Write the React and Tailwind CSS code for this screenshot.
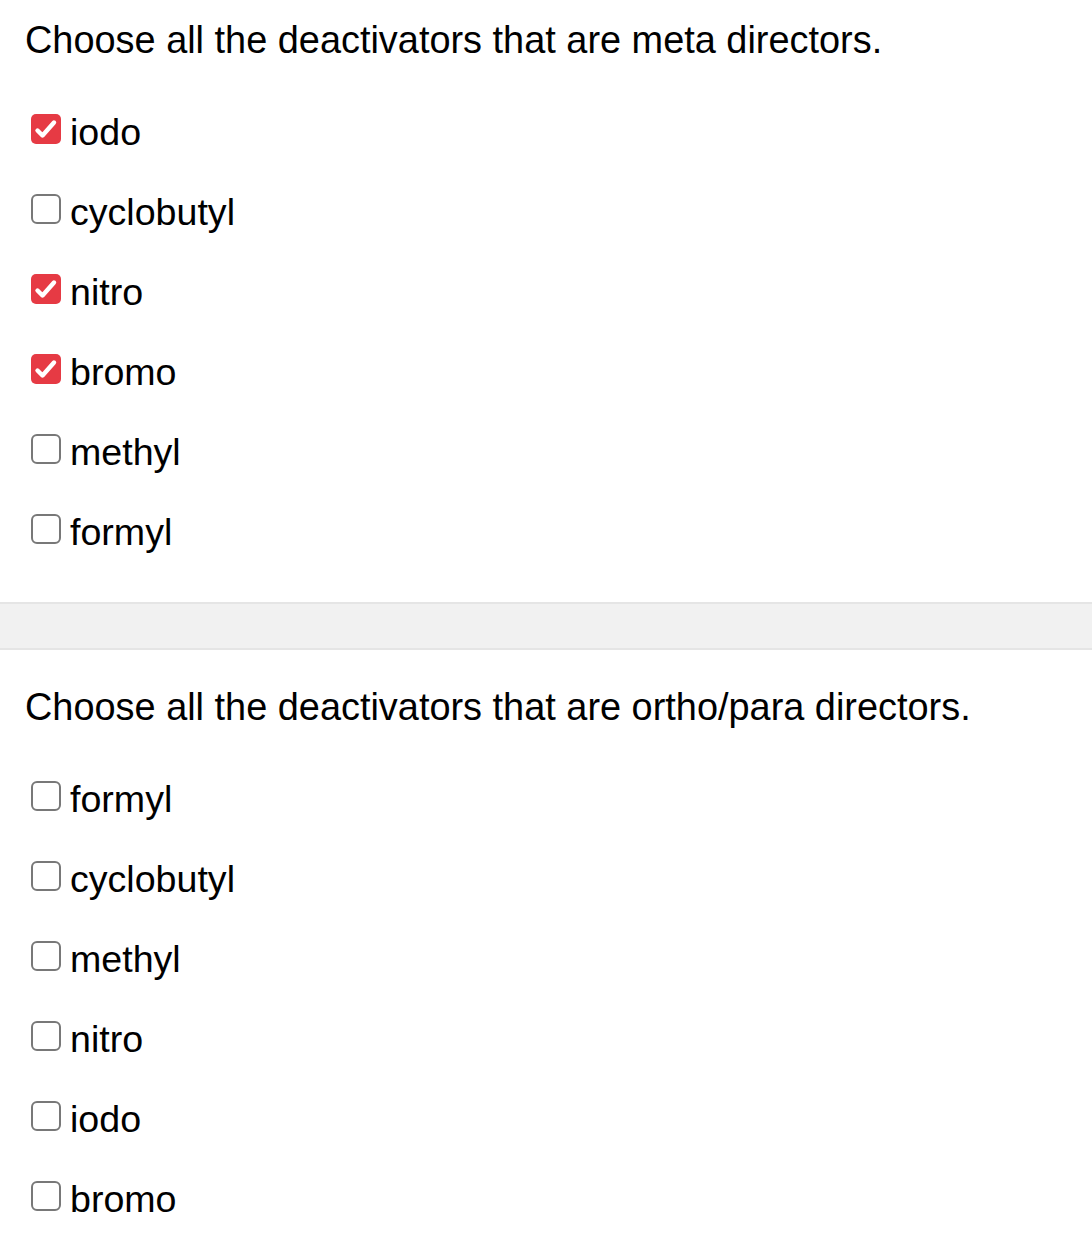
import React from 'react';

const questions = [
  {
    prompt: 'Choose all the deactivators that are meta directors.',
    options: [
      { label: 'iodo', checked: true },
      { label: 'cyclobutyl', checked: false },
      { label: 'nitro', checked: true },
      { label: 'bromo', checked: true },
      { label: 'methyl', checked: false },
      { label: 'formyl', checked: false },
    ],
  },
  {
    prompt: 'Choose all the deactivators that are ortho/para directors.',
    options: [
      { label: 'formyl', checked: false },
      { label: 'cyclobutyl', checked: false },
      { label: 'methyl', checked: false },
      { label: 'nitro', checked: false },
      { label: 'iodo', checked: false },
      { label: 'bromo', checked: false },
    ],
  },
];

function Box({ checked }) {
  if (checked) {
    return (
      <span className="mb-[9px] flex h-[30px] w-[30px] shrink-0 rounded-[5px] bg-[#e63a44]">
        <svg className="h-[30px] w-[30px]" viewBox="0 0 30 30" fill="none">
          <path d="M6.5 16.5l5 5L23 8.5" stroke="white" strokeWidth="4.4" strokeLinecap="round" strokeLinejoin="round" />
        </svg>
      </span>
    );
  }
  return <span className="mb-[9px] h-[30px] w-[30px] shrink-0 rounded-[6px] border-[2.5px] border-[#787878] bg-white"></span>;
}

function Question({ prompt, options, top }) {
  return (
    <div className={`px-[25px] ${top}`}>
      <h2 className="h-[48px] text-[37.9px] font-normal leading-[48px] text-black">{prompt}</h2>
      <ul className="mt-[29px] pb-[29px]">
        {options.map((opt, i) => (
          <li key={i} className="flex h-[80px] items-center gap-[9px] pl-[6px]">
            <Box checked={opt.checked} />
            <span className="text-[37.6px] leading-none text-black">{opt.label}</span>
          </li>
        ))}
      </ul>
    </div>
  );
}

export default function App() {
  return (
    <div className="min-h-[1242px] w-[1092px] bg-white" style={{ fontFamily: '"Liberation Sans", Arial, sans-serif' }}>
      <Question {...questions[0]} top="pt-[16px]" />
      {/* divider between questions */}
      <div className="h-[48px] border-y-2 border-[#e5e5e5] bg-[#f1f1f1]"></div>
      <Question {...questions[1]} top="pt-[33px]" />
    </div>
  );
}
